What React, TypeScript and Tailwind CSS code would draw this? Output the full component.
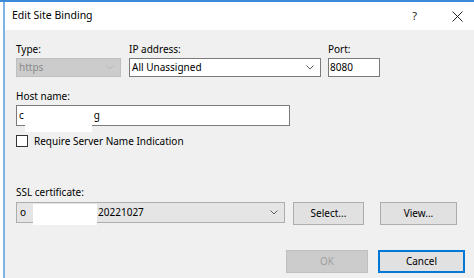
function Chevron({ color = '#606060' }: { color?: string }) {
  return (
    <svg width="8" height="5" viewBox="0 0 8 5" className="shrink-0">
      <path d="M0.5 0.5 L4 4 L7.5 0.5" fill="none" stroke={color} strokeWidth="1" />
    </svg>
  )
}

export default function App() {
  return (
    <div
      className="relative w-[474px] h-[278px] overflow-hidden bg-white flex flex-col text-black text-[10px]"
      style={{ fontFamily: '"Noto Sans", "Open Sans", sans-serif' }}
    >
      <div className="h-[2px] bg-[#3c8ad8] shrink-0" />
      <div className="flex flex-1">
        <div className="w-[3px] shrink-0 bg-white" />
        <div className="flex-1 flex flex-col border-l-2 border-[#7fb2e5]">
          {/* title bar */}
          <div className="h-[28px] bg-white flex items-center pl-[7px] shrink-0">
            <span className="text-[10.5px]">Edit Site Binding</span>
            <span className="ml-auto mr-[35px] text-[11px] text-[#222]">?</span>
            <svg width="11" height="11" viewBox="0 0 11 11" className="mr-[11px]">
              <path d="M0.5 0.5 L10.5 10.5 M10.5 0.5 L0.5 10.5" stroke="#222" strokeWidth="1" fill="none" />
            </svg>
          </div>

          {/* body */}
          <div className="flex-1 bg-[#f0f0f0] pl-[11px] pt-[11px]">
            <div className="flex items-start">
              <div className="w-[105px]">
                <div className="h-[16px] leading-[16px] mb-[1px]">Type:</div>
                <div className="h-[19px] bg-[#cccccc] border border-[#bfbfbf] flex items-center pl-[2px] pr-[6px] text-[#8a8a8a]">
                  <span>https</span>
                  <span className="ml-auto"><Chevron color="#b8b8b8" /></span>
                </div>
              </div>
              <div className="w-[192px] ml-[8px]">
                <div className="h-[16px] leading-[16px] mb-[1px]">IP address:</div>
                <div className="h-[19px] bg-white border border-[#7a7a7a] flex items-center pl-[2px] pr-[6px]">
                  <span>All Unassigned</span>
                  <span className="ml-auto"><Chevron /></span>
                </div>
              </div>
              <div className="w-[52px] ml-[7px]">
                <div className="h-[16px] leading-[16px] mb-[1px]">Port:</div>
                <div className="h-[19px] bg-white border border-[#7a7a7a] flex items-center pl-[1px]">
                  <span>8080</span>
                </div>
              </div>
            </div>

            <div className="mt-[11px] w-[274px]">
              <div className="h-[16px] leading-[16px] mb-[1px]">Host name:</div>
              <div className="h-[21px] bg-white border border-[#7a7a7a] flex items-center pl-[2px]">
                <span>c</span>
                <span className="ml-[70px]">g</span>
              </div>
            </div>

            <div className="mt-[9px] h-[12px] flex items-center">
              <div className="w-[12px] h-[12px] border border-[#333] bg-white shrink-0" />
              <span className="ml-[6px] leading-[12px]">Require Server Name Indication</span>
            </div>

            <div className="mt-[37px]">
              <div className="h-[16px] leading-[16px] mb-[2px]">SSL certificate:</div>
              <div className="flex items-start">
                <div className="w-[269px] h-[21px] bg-[#e5e5e5] border border-[#adadad] flex items-center pl-[3px] pr-[6px]">
                  <span>o</span>
                  <span className="ml-[72px]">20221027</span>
                  <span className="ml-auto"><Chevron /></span>
                </div>
                <button className="ml-[8px] w-[71px] h-[23px] bg-[#e1e1e1] border border-[#adadad] text-[10px]">
                  Select...
                </button>
                <button className="ml-[16px] w-[77px] h-[23px] bg-[#e1e1e1] border border-[#adadad] text-[10px]">
                  View...
                </button>
              </div>
            </div>

            <div className="mt-[25px] flex ml-[270px]">
              <button className="w-[82px] h-[23px] bg-[#cccccc] border border-[#bfbfbf] text-[#a0a0a0] text-[10px]">
                OK
              </button>
              <button className="ml-[10px] w-[87px] h-[23px] bg-[#e1e1e1] border-2 border-[#0078d7] text-[10px]">
                Cancel
              </button>
            </div>
          </div>
        </div>
      </div>

      {/* redaction patches */}
      <div className="absolute left-[25px] top-[110px] w-[67px] h-[22px] bg-white" />
      <div className="absolute left-[33px] top-[204px] w-[64px] h-[21px] bg-white" />
    </div>
  )
}
